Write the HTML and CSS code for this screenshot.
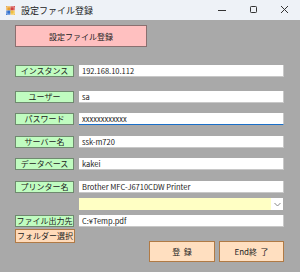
FILE: index.html
```html
<!DOCTYPE html>
<html lang="ja">
<head>
<meta charset="utf-8">
<link rel="stylesheet" href="styles.css">
</head>
<body>
<div class="window">
  <div class="titlebar">
    <svg class="appicon" width="10" height="10" viewBox="0 0 10 10">
      <rect x="0" y="0" width="5" height="5" fill="#e8a030"/>
      <rect x="5" y="0" width="5" height="5" fill="#d04040"/>
      <rect x="0" y="5" width="5" height="5" fill="#3070d0"/>
      <rect x="5" y="5" width="5" height="5" fill="#f0c040"/>
      <rect x="1" y="1" width="8" height="8" fill="none" stroke="#ffffff" stroke-width="0.6"/>
    </svg>
    <span class="title">設定ファイル登録</span>
    <div class="controls">
      <svg class="ctl" width="10" height="10" viewBox="0 0 10 10"><line x1="0" y1="5.5" x2="8" y2="5.5" stroke="#333" stroke-width="1"/></svg>
      <svg class="ctl" width="10" height="10" viewBox="0 0 10 10"><rect x="1.5" y="1.5" width="6" height="6" rx="0.8" fill="none" stroke="#333" stroke-width="1"/></svg>
      <svg class="ctl" width="10" height="10" viewBox="0 0 10 10"><path d="M1 1 L8 8 M8 1 L1 8" stroke="#333" stroke-width="1"/></svg>
    </div>
  </div>
  <div class="content">
    <div class="headbtn">設定ファイル登録</div>
    <div class="row r1"><div class="lbl">インスタンス</div><div class="tb">192.168.10.112</div></div>
    <div class="row r2"><div class="lbl">ユーザー</div><div class="tb">sa</div></div>
    <div class="row r3"><div class="lbl">パスワード</div><div class="tb focus">xxxxxxxxxxxx</div></div>
    <div class="row r4"><div class="lbl">サーバー名</div><div class="tb">ssk-m720</div></div>
    <div class="row r5"><div class="lbl">データベース</div><div class="tb">kakei</div></div>
    <div class="row r6"><div class="lbl">プリンター名</div><div class="tb">Brother MFC-J6710CDW Printer</div></div>
    <div class="combo"><div class="combo-field"></div><div class="combo-arrow"><svg width="7" height="5" viewBox="0 0 7 5"><path d="M0.5 1 L3.5 4 L6.5 1" fill="none" stroke="#888" stroke-width="1"/></svg></div></div>
    <div class="row r7"><div class="lbl">ファイル出力先</div><div class="tb">C:¥Temp.pdf</div></div>
    <div class="footer">
      <div class="folderbtn">フォルダー選択</div>
      <div class="actions">
        <div class="actbtn reg">登&nbsp;&nbsp;録</div>
        <div class="actbtn end">End終&nbsp;&nbsp;了</div>
      </div>
    </div>
  </div>
</div>
</body>
</html>
```
FILE: styles.css
```css
* { box-sizing: border-box; }
html, body { margin: 0; padding: 0; }
body {
  width: 300px;
  height: 272px;
  overflow: hidden;
  font-family: "Noto Sans CJK JP", "Noto Sans", sans-serif;
  background: #a9a9a9;
}
.window { width: 300px; height: 272px; display: flex; flex-direction: column; }
.titlebar {
  height: 20px;
  background: #eef2f7;
  display: flex;
  align-items: center;
  padding-left: 6px;
}
.appicon { width: 9px; height: 9px; }
.title { font-size: 9px; color: #222; margin-left: 6px; line-height: 1; }
.controls { margin-left: auto; display: flex; align-items: center; gap: 21px; margin-right: 10px; }
.ctl { display: block; }
.content {
  flex: 1;
  padding: 5px 0 0 15px;
  display: flex;
  flex-direction: column;
}
.headbtn {
  width: 132px;
  height: 22px;
  background: #ffc0c0;
  border: 1px solid #8a7070;
  font-size: 8px;
  color: #222;
  display: flex;
  align-items: center;
  justify-content: center;
}
.row { display: flex; align-items: center; gap: 5px; height: 12px; }
.r1 { margin-top: 18px; }
.r2 { margin-top: 14px; }
.r3 { margin-top: 10px; }
.r4 { margin-top: 11px; }
.r5 { margin-top: 10px; }
.r6 { margin-top: 11px; }
.r7 { margin-top: 5px; }
.lbl {
  width: 59px;
  height: 12px;
  background: #c0fcc0;
  border: 1px solid #6f8a6f;
  font-size: 8px;
  line-height: 10px;
  text-align: center;
  color: #222;
  white-space: nowrap;
}
.tb {
  width: 205px;
  height: 12px;
  background: #ffffff;
  border-right: 1px solid #c8c8c8;
  border-bottom: 1px solid #c8c8c8;
  font-size: 7.5px;
  line-height: 11px;
  padding-left: 3px;
  color: #222;
  white-space: nowrap;
  font-family: "Noto Sans CJK JP", "Noto Sans", sans-serif;
}
.tb.focus { border-bottom: 1px solid #1a6fc8; }
.combo {
  margin-top: 5px;
  margin-left: 64px;
  width: 204px;
  height: 12px;
  display: flex;
  background: #ffffff;
}
.combo-field { flex: 1; background: #ffffc4; }
.combo-arrow {
  width: 12px;
  display: flex;
  align-items: center;
  justify-content: center;
  background: #ffffff;
}
.footer { display: flex; align-items: flex-start; }
.folderbtn {
  margin-top: 2px;
  width: 60px;
  height: 14px;
  background: #ffdab9;
  border: 1px solid #b07a45;
  font-size: 8px;
  line-height: 12px;
  text-align: center;
  color: #222;
  white-space: nowrap;
}
.actions { display: flex; gap: 4px; margin-left: 74px; margin-top: 14px; }
.actbtn {
  width: 66px;
  height: 21px;
  background: #ffdfc0;
  border: 1px solid #b07a45;
  font-size: 8px;
  color: #222;
  display: flex;
  align-items: center;
  justify-content: center;
  white-space: nowrap;
}
.actbtn.end { width: 65px; }
```
